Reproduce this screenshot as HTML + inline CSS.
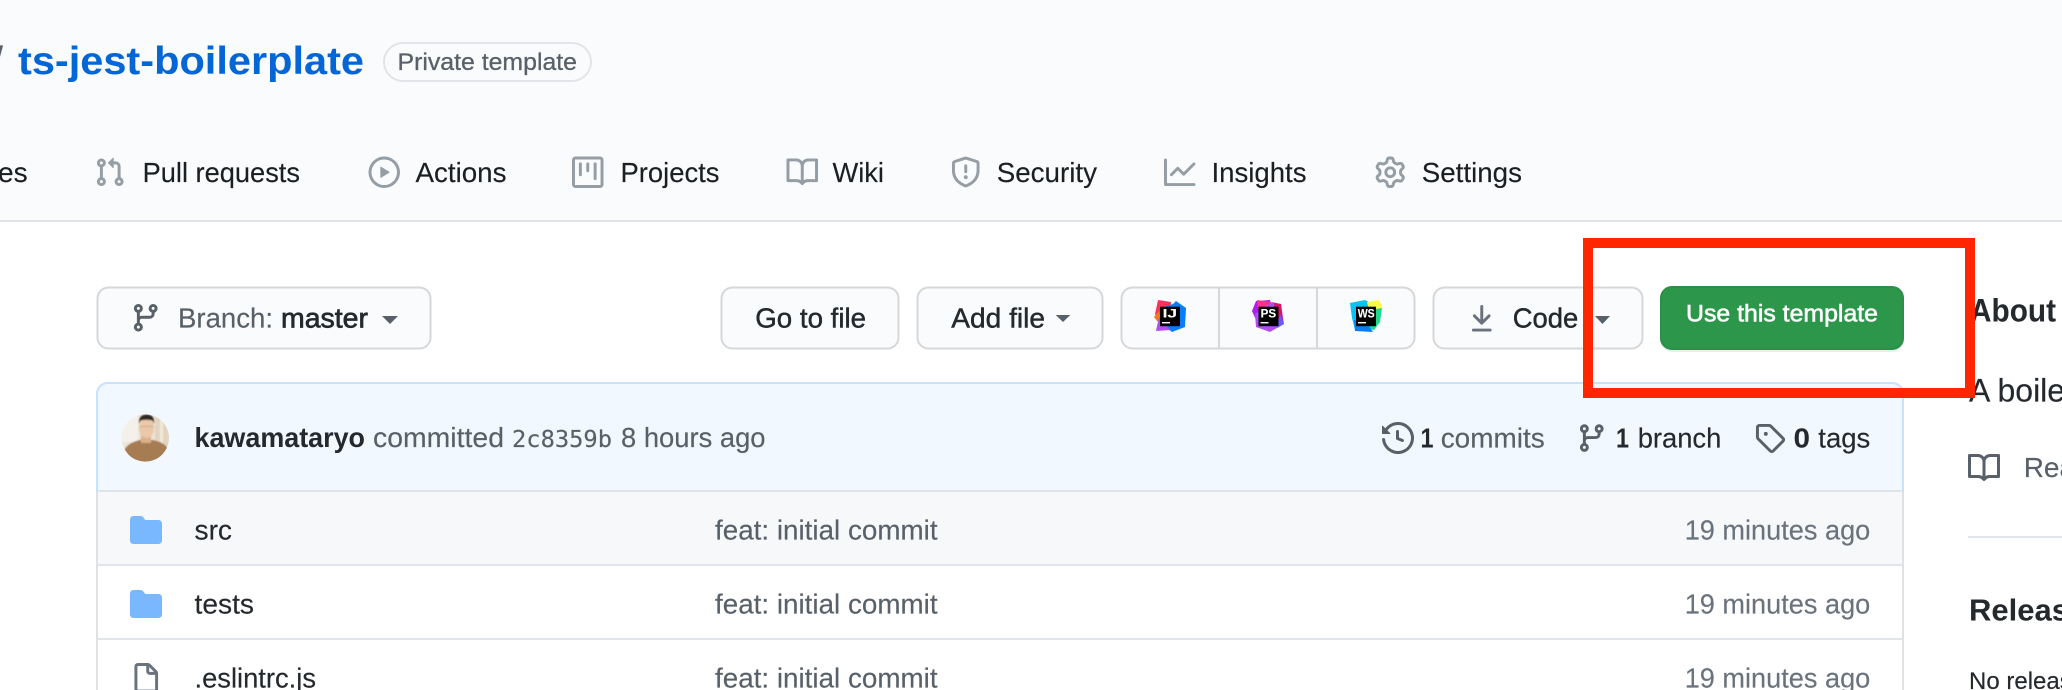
<!DOCTYPE html>
<html lang="en">
<head>
<meta charset="utf-8">
<title>ts-jest-boilerplate</title>
<style>
html,body{margin:0;padding:0;background:#fff;width:2062px;height:690px;overflow:hidden}
svg{display:block}
text{font-family:"Liberation Sans",Arial,sans-serif;font-size:28px;fill:#24292e;color:#24292e;stroke:currentColor;stroke-width:.15px}
.b{font-weight:700;stroke-width:0}
.m{stroke-width:.45px}
text.g,use.g{fill:#586069;color:#586069}
text.t,use.t{fill:#6a737d;color:#6a737d}
text.tab{fill:#1b1f23;color:#1b1f23}
.ti{fill:#959da5}
.btn{fill:#fafbfc;stroke:#d6d7d9;stroke-width:2}
text.ide{font-family:"Liberation Sans",sans-serif;font-weight:700;font-size:12px;fill:#fff;color:#fff;stroke-width:.1px}
</style>
</head>
<body>
<svg xmlns="http://www.w3.org/2000/svg" width="2062" height="690" viewBox="0 0 2062 690">
<defs>
<symbol id="pr" viewBox="0 0 16 16"><path fill-rule="evenodd" d="M7.177 3.073L9.573.677A.25.25 0 0110 .854v4.792a.25.25 0 01-.427.177L7.177 3.427a.25.25 0 010-.354zM3.75 2.5a.75.75 0 100 1.5.75.75 0 000-1.5zm-2.25.75a2.25 2.25 0 113 2.122v5.256a2.251 2.251 0 11-1.5 0V5.372A2.25 2.25 0 011.5 3.25zM11 2.5h-1V4h1a1 1 0 011 1v5.628a2.251 2.251 0 101.5 0V5A2.5 2.5 0 0011 2.5zm1 10.25a.75.75 0 111.5 0 .75.75 0 01-1.5 0zM3.75 12a.75.75 0 100 1.5.75.75 0 000-1.5z"/></symbol>
<symbol id="play" viewBox="0 0 16 16"><path fill-rule="evenodd" d="M1.5 8a6.5 6.5 0 1113 0 6.5 6.5 0 01-13 0zM8 0a8 8 0 100 16A8 8 0 008 0zM6.379 5.227A.25.25 0 006 5.442v5.117a.25.25 0 00.379.214l4.264-2.559a.25.25 0 000-.428L6.379 5.227z"/></symbol>
<symbol id="proj" viewBox="0 0 16 16"><path fill-rule="evenodd" d="M1.75 0A1.75 1.75 0 000 1.75v12.5C0 15.216.784 16 1.75 16h12.5A1.75 1.75 0 0016 14.25V1.75A1.75 1.75 0 0014.25 0H1.75zM1.5 1.75a.25.25 0 01.25-.25h12.5a.25.25 0 01.25.25v12.5a.25.25 0 01-.25.25H1.75a.25.25 0 01-.25-.25V1.75zM11.75 3a.75.75 0 00-.75.75v7.5a.75.75 0 001.5 0v-7.5a.75.75 0 00-.75-.75zm-8.25.75a.75.75 0 011.5 0v5.5a.75.75 0 01-1.5 0v-5.5zM8 3a.75.75 0 00-.75.75v3.5a.75.75 0 001.5 0v-3.5A.75.75 0 008 3z"/></symbol>
<symbol id="book" viewBox="0 0 16 16"><path fill-rule="evenodd" d="M0 1.75A.75.75 0 01.75 1h4.253c1.227 0 2.317.59 3 1.501A3.744 3.744 0 0111.006 1h4.245a.75.75 0 01.75.75v10.5a.75.75 0 01-.75.75h-4.507a2.25 2.25 0 00-1.591.659l-.622.621a.75.75 0 01-1.06 0l-.622-.621A2.25 2.25 0 005.258 13H.75a.75.75 0 01-.75-.75V1.75zm8.755 3a2.25 2.25 0 012.25-2.25H14.5v9h-3.757c-.71 0-1.4.201-1.992.572l.004-7.322zm-1.504 7.324l.004-5.073-.002-2.253A2.25 2.25 0 005.003 2.5H1.5v9h3.757a3.75 3.75 0 011.994.574z"/></symbol>
<symbol id="shield" viewBox="0 0 16 16"><path fill-rule="evenodd" d="M7.467.133a1.75 1.75 0 011.066 0l5.25 1.68A1.75 1.75 0 0115 3.48V7c0 1.566-.32 3.182-1.303 4.682-.983 1.498-2.585 2.813-5.032 3.855a1.7 1.7 0 01-1.33 0c-2.447-1.042-4.049-2.357-5.032-3.855C1.32 10.182 1 8.566 1 7V3.48a1.75 1.75 0 011.217-1.667l5.25-1.68zm.61 1.429a.25.25 0 00-.153 0l-5.25 1.68a.25.25 0 00-.174.238V7c0 1.358.275 2.666 1.057 3.86.784 1.194 2.121 2.34 4.366 3.297a.2.2 0 00.154 0c2.245-.956 3.582-2.104 4.366-3.298C13.225 9.666 13.5 8.36 13.5 7V3.48a.25.25 0 00-.174-.237l-5.25-1.68zM9 10.5a1 1 0 11-2 0 1 1 0 012 0zm-.25-5.75a.75.75 0 10-1.5 0v3a.75.75 0 001.5 0v-3z"/></symbol>
<symbol id="graph" viewBox="0 0 16 16"><path fill-rule="evenodd" d="M1.5 1.75a.75.75 0 00-1.5 0v12.5c0 .414.336.75.75.75h14.5a.75.75 0 000-1.5H1.5V1.75zm14.28 2.53a.75.75 0 00-1.06-1.06L10 7.94 7.53 5.47a.75.75 0 00-1.06 0L3.22 8.72a.75.75 0 001.06 1.06L7 7.06l2.47 2.47a.75.75 0 001.06 0l5.25-5.25z"/></symbol>
<symbol id="gear" viewBox="0 0 16 16"><path fill-rule="evenodd" d="M7.429 1.525a6.593 6.593 0 011.142 0c.036.003.108.036.137.146l.289 1.105c.147.56.55.967.997 1.189.174.086.341.183.501.29.417.278.97.423 1.53.27l1.102-.303c.11-.03.175.016.195.046.219.31.41.641.573.989.014.031.022.11-.059.19l-.815.806c-.411.406-.562.957-.53 1.456a4.588 4.588 0 010 .582c-.032.499.119 1.05.53 1.456l.815.806c.08.08.073.159.059.19a6.494 6.494 0 01-.573.99c-.02.029-.086.074-.195.045l-1.103-.303c-.559-.153-1.112-.008-1.529.27-.16.107-.327.204-.5.29-.449.222-.851.628-.998 1.189l-.289 1.105c-.029.11-.101.143-.137.146a6.613 6.613 0 01-1.142 0c-.036-.003-.108-.037-.137-.146l-.289-1.105c-.147-.56-.55-.967-.997-1.189a4.502 4.502 0 01-.501-.29c-.417-.278-.97-.423-1.53-.27l-1.102.303c-.11.03-.175-.016-.195-.046a6.492 6.492 0 01-.573-.989c-.014-.031-.022-.11.059-.19l.815-.806c.411-.406.562-.957.53-1.456a4.587 4.587 0 010-.582c.032-.499-.119-1.05-.53-1.456l-.815-.806c-.08-.08-.073-.159-.059-.19a6.44 6.44 0 01.573-.99c.02-.029.086-.075.195-.045l1.103.303c.559.153 1.112.008 1.529-.27.16-.107.327-.204.5-.29.449-.222.851-.628.998-1.189l.289-1.105c.029-.11.101-.143.137-.146zM8 0c-.236 0-.47.01-.701.03-.743.065-1.29.615-1.458 1.261l-.29 1.106c-.017.066-.078.158-.211.224a5.994 5.994 0 00-.668.386c-.123.082-.233.09-.3.071L3.27 2.776c-.644-.177-1.392.02-1.82.63a7.977 7.977 0 00-.704 1.217c-.315.675-.111 1.422.363 1.891l.815.806c.05.048.098.147.088.294a6.084 6.084 0 000 .772c.01.147-.038.246-.088.294l-.815.806c-.474.469-.678 1.216-.363 1.891.2.428.436.835.704 1.218.428.609 1.176.806 1.82.63l1.103-.303c.066-.019.176-.011.299.071.213.143.436.272.668.386.133.066.194.158.212.224l.289 1.106c.169.646.715 1.196 1.458 1.26a8.094 8.094 0 001.402 0c.743-.064 1.29-.614 1.458-1.26l.29-1.106c.017-.066.078-.158.211-.224a5.98 5.98 0 00.668-.386c.123-.082.233-.09.3-.071l1.102.302c.644.177 1.392-.02 1.82-.63.268-.382.505-.789.704-1.217.315-.675.111-1.422-.364-1.891l-.814-.806c-.05-.048-.098-.147-.088-.294a6.1 6.1 0 000-.772c-.01-.147.039-.246.088-.294l.814-.806c.475-.469.679-1.216.364-1.891a7.992 7.992 0 00-.704-1.218c-.428-.609-1.176-.806-1.82-.63l-1.103.303c-.066.019-.176.011-.299-.071a5.991 5.991 0 00-.668-.386c-.133-.066-.194-.158-.212-.224L10.16 1.29C9.99.645 9.444.095 8.701.031A8.094 8.094 0 008 0zm1.5 8a1.5 1.5 0 11-3 0 1.5 1.5 0 013 0zM11 8a3 3 0 11-6 0 3 3 0 016 0z"/></symbol>
<symbol id="branch" viewBox="0 0 16 16"><path fill-rule="evenodd" d="M11.75 2.5a.75.75 0 100 1.5.75.75 0 000-1.5zm-2.25.75a2.25 2.25 0 113 2.122V6A2.5 2.5 0 0110 8.5H6a1 1 0 00-1 1v1.128a2.251 2.251 0 11-1.5 0V5.372a2.25 2.25 0 111.5 0v1.836A2.492 2.492 0 016 7h4a1 1 0 001-1v-.628A2.25 2.25 0 019.5 3.25zM4.25 12a.75.75 0 100 1.5.75.75 0 000-1.5zM3.5 3.25a.75.75 0 111.5 0 .75.75 0 01-1.5 0z"/></symbol>
<symbol id="history" viewBox="0 0 16 16"><path fill-rule="evenodd" d="M1.643 3.143L.427 1.927A.25.25 0 000 2.104V5.75c0 .138.112.25.25.25h3.646a.25.25 0 00.177-.427L2.715 4.215a6.5 6.5 0 11-1.18 4.458.75.75 0 10-1.493.154 8.001 8.001 0 101.6-5.684zM7.75 4a.75.75 0 01.75.75v2.992l2.028.812a.75.75 0 01-.557 1.392l-2.5-1A.75.75 0 017 8.25v-3.5A.75.75 0 017.75 4z"/></symbol>
<symbol id="tag" viewBox="0 0 16 16"><path fill-rule="evenodd" d="M2.5 7.775V2.75a.25.25 0 01.25-.25h5.025a.25.25 0 01.177.073l6.25 6.25a.25.25 0 010 .354l-5.025 5.025a.25.25 0 01-.354 0l-6.25-6.25a.25.25 0 01-.073-.177zm-1.5 0V2.75C1 1.784 1.784 1 2.75 1h5.025c.464 0 .91.184 1.238.513l6.25 6.25a1.75 1.75 0 010 2.474l-5.026 5.026a1.75 1.75 0 01-2.474 0l-6.25-6.25A1.75 1.75 0 011 7.775zM6 5a1 1 0 100 2 1 1 0 000-2z"/></symbol>
<symbol id="dl" viewBox="0 0 16 16"><path fill-rule="evenodd" d="M7.47 10.78a.75.75 0 001.06 0l3.75-3.75a.75.75 0 00-1.06-1.06L8.75 8.44V1.75a.75.75 0 00-1.5 0v6.69L4.78 5.97a.75.75 0 00-1.06 1.06l3.75 3.75zM3.75 13a.75.75 0 000 1.5h8.5a.75.75 0 000-1.5h-8.5z"/></symbol>
<symbol id="folder" viewBox="0 0 16 16"><path fill-rule="evenodd" d="M1.75 1A1.75 1.75 0 000 2.75v10.5C0 14.216.784 15 1.75 15h12.5A1.75 1.75 0 0016 13.25v-8.5A1.75 1.75 0 0014.25 3h-6.5a.25.25 0 01-.2-.1l-.9-1.2c-.33-.44-.85-.7-1.4-.7h-3.5z"/></symbol>
<symbol id="file" viewBox="0 0 16 16"><path fill-rule="evenodd" d="M3.75 1.5a.25.25 0 00-.25.25v11.5c0 .138.112.25.25.25h8.5a.25.25 0 00.25-.25V6H9.75A1.75 1.75 0 018 4.25V1.5H3.75zm5.75.56v2.19c0 .138.112.25.25.25h2.19L9.5 2.06zM2 1.75C2 .784 2.784 0 3.75 0h5.086c.464 0 .909.184 1.237.513l3.414 3.414c.329.328.513.773.513 1.237v8.086A1.75 1.75 0 0112.25 15h-8.5A1.75 1.75 0 012 13.25V1.75z"/></symbol>
<clipPath id="av"><circle cx="145.3" cy="438" r="23.6"/></clipPath>
<filter id="soft" x="-10%" y="-10%" width="120%" height="120%"><feGaussianBlur stdDeviation=".8"/></filter>
</defs>

<!-- header -->
<rect x="0" y="0" width="2062" height="220" fill="#fafbfc"/>
<rect x="0" y="220" width="2062" height="2" fill="#e1e4e8"/>

<text x="3" y="74" text-anchor="end" style="font-size:39px" class="g">/</text>
<text x="18" y="74" class="b" style="font-size:39px;fill:#0366d6" textLength="346" lengthAdjust="spacingAndGlyphs">ts-jest-boilerplate</text>
<rect x="384" y="43" width="207" height="38" rx="19" fill="none" stroke="#e1e4e8" stroke-width="2"/>
<text x="397.5" y="70" class="m g" style="font-size:24px;stroke-width:.3px" textLength="179.5" lengthAdjust="spacingAndGlyphs">Private template</text>

<!-- tabs -->
<text x="27.6" y="182" text-anchor="end" class="tab">Issues</text>
<use href="#pr" x="94" y="156.5" width="31.5" height="31.5" class="ti"/>
<text x="142.6" y="182" class="tab" textLength="157.4" lengthAdjust="spacingAndGlyphs">Pull requests</text>
<use href="#play" x="368.5" y="156.5" width="31.5" height="31.5" class="ti"/>
<text x="415.5" y="182" class="tab" textLength="91" lengthAdjust="spacingAndGlyphs">Actions</text>
<use href="#proj" x="572" y="156.5" width="31.5" height="31.5" class="ti"/>
<text x="620.5" y="182" class="tab" textLength="99" lengthAdjust="spacingAndGlyphs">Projects</text>
<use href="#book" x="786.5" y="156.5" width="31.5" height="31.5" class="ti"/>
<text x="832.5" y="182" class="tab" textLength="51.5" lengthAdjust="spacingAndGlyphs">Wiki</text>
<use href="#shield" x="950" y="156.5" width="31.5" height="31.5" class="ti"/>
<text x="996.7" y="182" class="tab" textLength="100.3" lengthAdjust="spacingAndGlyphs">Security</text>
<use href="#graph" x="1164" y="156.5" width="31.5" height="31.5" class="ti"/>
<text x="1211.5" y="182" class="tab" textLength="95" lengthAdjust="spacingAndGlyphs">Insights</text>
<use href="#gear" x="1374.5" y="156.5" width="31.5" height="31.5" class="ti"/>
<text x="1421.7" y="182" class="tab" textLength="100.3" lengthAdjust="spacingAndGlyphs">Settings</text>

<!-- branch button -->
<rect x="97.5" y="288.5" width="333" height="61" fill="#e8e9eb" rx="11"/>
<rect x="97.5" y="287.5" width="333" height="61" rx="11" class="btn"/>
<use href="#branch" x="130" y="302" width="31.5" height="31.5" class="g"/>
<text x="178" y="327.7" class="g" textLength="95" lengthAdjust="spacingAndGlyphs">Branch:</text>
<text x="281" y="327.7" style="stroke-width:.7px" textLength="87" lengthAdjust="spacingAndGlyphs">master</text>
<path d="M382 316h16l-8 8z" fill="#586069"/>

<!-- go to file -->
<rect x="721.5" y="288.5" width="177" height="61" fill="#e8e9eb" rx="11"/>
<rect x="721.5" y="287.5" width="177" height="61" rx="11" class="btn"/>
<text x="755.3" y="327.7" class="m" textLength="110.7" lengthAdjust="spacingAndGlyphs">Go to file</text>

<!-- add file -->
<rect x="917.5" y="288.5" width="185" height="61" fill="#e8e9eb" rx="11"/>
<rect x="917.5" y="287.5" width="185" height="61" rx="11" class="btn"/>
<text x="951.3" y="327.7" class="m" textLength="93.7" lengthAdjust="spacingAndGlyphs">Add file</text>
<path d="M1055.7 315h14.6l-7.3 7z" fill="#586069"/>

<!-- IDE buttons -->
<rect x="1121.5" y="287.5" width="293" height="61" rx="11" class="btn"/>
<rect x="1218" y="287" width="2" height="62" fill="#d6d7d9"/>
<rect x="1316" y="287" width="2" height="62" fill="#d6d7d9"/>

<g transform="translate(1154 300)">
<polygon points="4,0 17,2 14,24 3,18 1,14" fill="#fe315d"/>
<polygon points="22,1 32,8 31,27 18,32 13,28 12,6 19,4" fill="#087cfa"/>
<polygon points="0,17 5,11 8,24 3,21" fill="#f97a12"/>
<polygon points="2,31 5,17 16,30" fill="#b74af7"/>
<rect x="6" y="6.7" width="20" height="19.5" fill="#000"/>
<text x="8.6" y="17.4" class="ide" textLength="14.5" lengthAdjust="spacingAndGlyphs">IJ</text>
<rect x="8" y="22" width="8" height="1.4" fill="#fff"/>
</g>
<g transform="translate(1252 300)">
<polygon points="4,1 18,0 21,14 5,22 0,11" fill="#af1df5"/>
<polygon points="5,0 19,2 20,10 6,10" fill="#ff318c"/>
<polygon points="20,2 29,4 32,24 18,32 4,27 3,14" fill="#b24eee"/>
<polygon points="22,3 29,4 31,22 24,18" fill="#dd1265"/>
<polygon points="28,14 32,24 25,28" fill="#6b57ff"/>
<rect x="6.5" y="6.7" width="20" height="19.5" fill="#000"/>
<text x="8.6" y="17.4" class="ide" textLength="15.5" lengthAdjust="spacingAndGlyphs">PS</text>
<rect x="8.5" y="22" width="8" height="1.4" fill="#fff"/>
</g>
<g transform="translate(1350 300)">
<polygon points="0,3 15,0 22,4 18,20 5,30 2,18" fill="#07c3f2"/>
<polygon points="17,2 29,0 32,6 30,16 20,14" fill="#fcf84a"/>
<polygon points="20,10 32,8 30,22 24,30 14,28" fill="#21d789"/>
<polygon points="4,20 16,22 23,32 5,31" fill="#087cfa"/>
<rect x="6" y="6.7" width="20" height="19.5" fill="#000"/>
<text x="7.7" y="17.4" class="ide" textLength="17" lengthAdjust="spacingAndGlyphs">WS</text>
<rect x="8" y="22" width="8" height="1.4" fill="#fff"/>
</g>

<!-- code button -->
<rect x="1433.5" y="288.5" width="209" height="61" fill="#e8e9eb" rx="11"/>
<rect x="1433.5" y="287.5" width="209" height="61" rx="11" class="btn"/>
<use href="#dl" x="1466" y="303" width="31.5" height="31.5" class="t"/>
<text x="1512.7" y="327.7" class="m" textLength="65.5" lengthAdjust="spacingAndGlyphs">Code</text>
<path d="M1595 316h15l-7.5 8z" fill="#586069"/>

<!-- use this template -->
<rect x="1660" y="288" width="244" height="64" rx="12" fill="#eceded"/>
<rect x="1661" y="287" width="242" height="62" rx="11" fill="#2c974b" stroke="#2a8f47" stroke-width="2"/>
<text x="1686" y="321.7" style="font-size:24.5px;fill:#fff;color:#fff;stroke-width:.6px" textLength="192" lengthAdjust="spacingAndGlyphs">Use this template</text>

<!-- table -->
<path d="M97 700V394a11 11 0 0 1 11-11H1892a11 11 0 0 1 11 11V700Z" fill="#fff" stroke="#dfe2e5" stroke-width="2"/>
<path d="M97 491V394a11 11 0 0 1 11-11H1892a11 11 0 0 1 11 11V491Z" fill="#f1f8ff" stroke="#c8e1ff" stroke-width="2"/>
<rect x="98" y="491" width="1804" height="74" fill="#f6f8fa"/>
<rect x="98" y="490" width="1804" height="2" fill="#e1e4e8"/>
<rect x="98" y="564" width="1804" height="2" fill="#e1e4e8"/>
<rect x="98" y="638" width="1804" height="2" fill="#e1e4e8"/>

<!-- avatar -->
<g clip-path="url(#av)">
<rect x="120" y="412" width="52" height="52" fill="#ece5d8"/>
<g filter="url(#soft)">
<rect x="120" y="412" width="18" height="30" fill="#f4f1ea"/>
<rect x="155" y="412" width="17" height="34" fill="#e2d4bf"/>
<rect x="160" y="412" width="3" height="34" fill="#f1e9da"/>
<path d="M124 464v-13q3-8 16-11h12q14 2 17 11v13z" fill="#a67b52"/>
<rect x="141" y="434" width="10" height="9" fill="#dcae8c"/>
<ellipse cx="146.5" cy="428" rx="7.5" ry="10" fill="#ecc7a8"/>
<path d="M139 424q-1-9 7.500-9.500 8.500 0 7.500 9.500l-1.500-3.500q-6-1.500-12 0z" fill="#2e2824"/>
<path d="M139.500 426h14v1h-14z" fill="#8d7a6a" opacity=".35"/>
</g>
</g>

<!-- commit row -->
<text x="194.5" y="447" class="b" textLength="170.5" lengthAdjust="spacingAndGlyphs">kawamataryo</text>
<text x="373" y="447" class="g" textLength="131" lengthAdjust="spacingAndGlyphs">committed</text>
<text x="512" y="447" class="g" style="font-family:'DejaVu Sans Mono',monospace;font-size:23px" textLength="100" lengthAdjust="spacingAndGlyphs">2c8359b</text>
<text x="621" y="447" class="g" textLength="144.500" lengthAdjust="spacingAndGlyphs">8 hours ago</text>

<use href="#history" x="1382" y="422" width="32" height="32" class="g"/>
<text x="1420.5" y="447.5" class="b" textLength="13" lengthAdjust="spacingAndGlyphs">1</text>
<text x="1440.7" y="447.5" class="g" textLength="104" lengthAdjust="spacingAndGlyphs">commits</text>
<use href="#branch" x="1576" y="422.3" width="31.5" height="31.5" class="g"/>
<text x="1616" y="447.5" class="b" textLength="13" lengthAdjust="spacingAndGlyphs">1</text>
<text x="1637.7" y="447.5" textLength="83.6" lengthAdjust="spacingAndGlyphs">branch</text>
<use href="#tag" x="1754" y="422" width="31.5" height="31.5" class="g"/>
<text x="1793.5" y="447.5" class="b" textLength="16.5" lengthAdjust="spacingAndGlyphs">0</text>
<text x="1818.3" y="447.5" textLength="52" lengthAdjust="spacingAndGlyphs">tags</text>

<!-- rows -->
<use href="#folder" x="130" y="514" width="32" height="32" fill="#79b8ff"/>
<text x="194.5" y="539.3" textLength="37.500" lengthAdjust="spacingAndGlyphs">src</text>
<text x="715" y="539.3" class="g" textLength="222.6" lengthAdjust="spacingAndGlyphs">feat: initial commit</text>
<text x="1684.7" y="539.3" class="t" textLength="185.6" lengthAdjust="spacingAndGlyphs">19 minutes ago</text>

<use href="#folder" x="130" y="588" width="32" height="32" fill="#79b8ff"/>
<text x="194.5" y="613.3" textLength="59.500" lengthAdjust="spacingAndGlyphs">tests</text>
<text x="715" y="613.3" class="g" textLength="222.6" lengthAdjust="spacingAndGlyphs">feat: initial commit</text>
<text x="1684.7" y="613.3" class="t" textLength="185.6" lengthAdjust="spacingAndGlyphs">19 minutes ago</text>

<use href="#file" x="130.5" y="663" width="31.5" height="31.5" class="t"/>
<text x="194.5" y="687.3" textLength="121.500" lengthAdjust="spacingAndGlyphs">.eslintrc.js</text>
<text x="715" y="687.3" class="g" textLength="222.6" lengthAdjust="spacingAndGlyphs">feat: initial commit</text>
<text x="1684.7" y="687.3" class="t" textLength="185.6" lengthAdjust="spacingAndGlyphs">19 minutes ago</text>

<!-- sidebar -->
<text x="1970" y="321.7" class="b" style="font-size:32px" textLength="86" lengthAdjust="spacingAndGlyphs">About</text>
<text x="1969" y="401.7" style="font-size:32px">A boilerplate</text>
<use href="#book" x="1968" y="452" width="32" height="32" class="g"/>
<text x="2023.7" y="477" class="g">Readme</text>
<rect x="1968" y="536" width="94" height="2" fill="#e1e4e8"/>
<text x="1969" y="620.7" class="b" style="font-size:31px">Releases</text>
<text x="1969" y="689" style="font-size:24px">No releases published</text>

<!-- red annotation -->
<rect x="1588" y="243" width="382" height="150" fill="none" stroke="#ff2600" stroke-width="10"/>
</svg>
</body>
</html>
